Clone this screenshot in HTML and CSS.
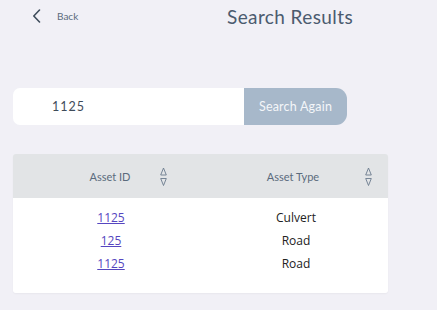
FILE: index.html
```html
<!DOCTYPE html>
<html>
<head>
<meta charset="utf-8">
<link rel="stylesheet" href="styles.css">
</head>
<body>
<div class="page">
  <header class="topbar">
    <div class="back">
      <svg class="chev" width="9" height="14" viewBox="0 0 9 14"><path d="M7.5 1 L1.8 7 L7.5 13" fill="none" stroke="#3f4d5c" stroke-width="1.6" stroke-linecap="round" stroke-linejoin="round"/></svg>
      <span class="back-text">Back</span>
    </div>
    <h1 class="title">Search Results</h1>
  </header>

  <div class="search">
    <div class="search-input">1125</div>
    <button class="search-btn">Search Again</button>
  </div>

  <div class="table">
    <div class="thead">
      <span class="th">Asset ID</span>
      <svg class="sort" width="7" height="20" viewBox="0 0 7 20"><path d="M3.5 1 L6.3 8 L0.7 8 Z" fill="none" stroke="#6b7b8d" stroke-width="0.9"/><path d="M0.7 11.5 L6.3 11.5 L3.5 18.5 Z" fill="none" stroke="#6b7b8d" stroke-width="0.9"/></svg>
      <span class="gap1"></span>
      <span class="th">Asset Type</span>
      <span class="gap2"></span>
      <svg class="sort" width="7" height="20" viewBox="0 0 7 20"><path d="M3.5 1 L6.3 8 L0.7 8 Z" fill="none" stroke="#6b7b8d" stroke-width="0.9"/><path d="M0.7 11.5 L6.3 11.5 L3.5 18.5 Z" fill="none" stroke="#6b7b8d" stroke-width="0.9"/></svg>
    </div>
    <div class="tbody">
      <a class="td link" href="#">1125</a><span class="td">Culvert</span>
      <a class="td link" href="#">125</a><span class="td">Road</span>
      <a class="td link" href="#">1125</a><span class="td">Road</span>
    </div>
  </div>
</div>
</body>
</html>
```

FILE: styles.css
```css
html, body {
  margin: 0;
  padding: 0;
  background: #f1f0f6;
}
.page {
  width: 437px;
  height: 310px;
  font-family: Lato, "Open Sans", sans-serif;
}
.topbar {
  display: flex;
  align-items: center;
  height: 32px;
  padding-left: 32px;
}
.back {
  display: flex;
  align-items: center;
  gap: 16px;
  width: 195px;
}
.chev { display: block; }
.back-text {
  font-size: 10px;
  color: #5a6a7c;
}
.title {
  margin: 0;
  font-size: 19px;
  font-weight: 400;
  letter-spacing: 0.4px;
  color: #4b5b6f;
}
.search {
  display: flex;
  margin: 56px 0 0 13px;
  height: 37px;
}
.search-input {
  width: 192px;
  padding-left: 39px;
  background: #ffffff;
  border-radius: 7px 0 0 7px;
  font-size: 12.5px;
  letter-spacing: 1px;
  color: #3f4c5a;
  line-height: 37px;
}
.search-btn {
  width: 103px;
  height: 37px;
  border: 0;
  padding: 0;
  background: #a7b8ca;
  border-radius: 0 11px 11px 0;
  color: #f4f6f9;
  font-family: Lato, "Open Sans", sans-serif;
  font-size: 12.5px;
  letter-spacing: 0.2px;
}
.table {
  margin: 29px 0 0 13px;
  width: 375px;
  border-radius: 3px;
  box-shadow: 0 1px 2px rgba(0, 0, 0, 0.04);
}
.thead {
  display: flex;
  align-items: center;
  height: 44px;
  padding-left: 47px;
  background: #e2e4e6;
  border-radius: 3px 3px 0 0;
}
.th {
  width: 100px;
  text-align: center;
  font-size: 11px;
  color: #5b6b7d;
}
.sort { display: block; margin-top: 1px; }
.gap1 { width: 76px; }
.gap2 { width: 22px; }
.tbody {
  display: grid;
  grid-template-columns: 196px 174px;
  grid-auto-rows: 23px;
  padding: 8px 0 18px;
  background: #ffffff;
  border-radius: 0 0 3px 3px;
}
.td {
  text-align: center;
  line-height: 23px;
  font-family: "Open Sans", sans-serif;
  font-size: 12px;
  color: #222;
}
.link {
  color: #5646c0;
  text-decoration: underline;
}
```
